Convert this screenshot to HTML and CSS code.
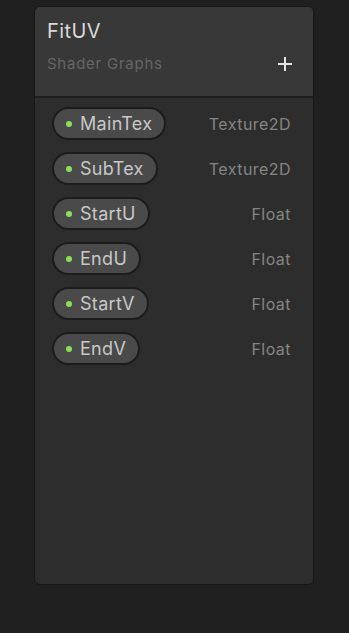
FILE: index.html
```html
<!DOCTYPE html>
<html>
<head>
<meta charset="utf-8">
<link rel="stylesheet" href="styles.css">
</head>
<body>
<div class="panel">
  <div class="header">
    <div class="title">FitUV</div>
    <div class="subrow">
      <span class="subtitle">Shader Graphs</span>
      <svg class="plus" width="16" height="16" viewBox="0 0 16 16"><path d="M8 1V15M1 8H15" stroke="#e6e6e6" stroke-width="2"/></svg>
    </div>
  </div>
  <div class="list">
    <div class="row"><span class="pill"><span class="dot"></span>MainTex</span><span class="type">Texture2D</span></div>
    <div class="row"><span class="pill"><span class="dot"></span>SubTex</span><span class="type">Texture2D</span></div>
    <div class="row"><span class="pill"><span class="dot"></span>StartU</span><span class="type">Float</span></div>
    <div class="row"><span class="pill"><span class="dot"></span>EndU</span><span class="type">Float</span></div>
    <div class="row"><span class="pill"><span class="dot"></span>StartV</span><span class="type">Float</span></div>
    <div class="row"><span class="pill"><span class="dot"></span>EndV</span><span class="type">Float</span></div>
  </div>
</div>
</body>
</html>
```
FILE: styles.css
```css
html, body {
  margin: 0;
  padding: 0;
  background: #202020;
  font-family: Inter, "Noto Sans", sans-serif;
}
.panel {
  margin: 6px 0 0 34px;
  width: 278px;
  height: 577px;
  border: 1px solid #171717;
  border-radius: 6px;
  background: #2d2d2d;
  overflow: hidden;
  display: flex;
  flex-direction: column;
}
.header {
  background: #383838;
  padding: 12px 20px 22px 12px;
  border-bottom: 2px solid #1d1d1d;
}
.title {
  font-size: 20px;
  line-height: 24px;
  letter-spacing: 0.4px;
  color: #d9d9d9;
}
.subrow {
  margin-top: 11px;
  display: flex;
  align-items: center;
  justify-content: space-between;
  height: 20px;
}
.subtitle {
  font-size: 15px;
  line-height: 20px;
  letter-spacing: 0.75px;
  color: #666666;
}
.plus {
  display: block;
}
.list {
  padding: 9px 22px 0 17px;
  display: flex;
  flex-direction: column;
  gap: 12px;
}
.row {
  display: flex;
  align-items: center;
  justify-content: space-between;
  height: 33px;
}
.pill {
  box-sizing: border-box;
  height: 33px;
  display: flex;
  align-items: center;
  gap: 8px;
  padding: 0 12px;
  border: 2px solid #1c1c1c;
  border-radius: 17px;
  background: #4a4a4a;
  color: #c8c8c8;
  font-size: 18px;
  letter-spacing: 0.3px;
}
.dot {
  width: 6px;
  height: 6px;
  border-radius: 50%;
  background: #8be05a;
}
.type {
  font-size: 16px;
  letter-spacing: 0.45px;
  color: #858585;
}
```
